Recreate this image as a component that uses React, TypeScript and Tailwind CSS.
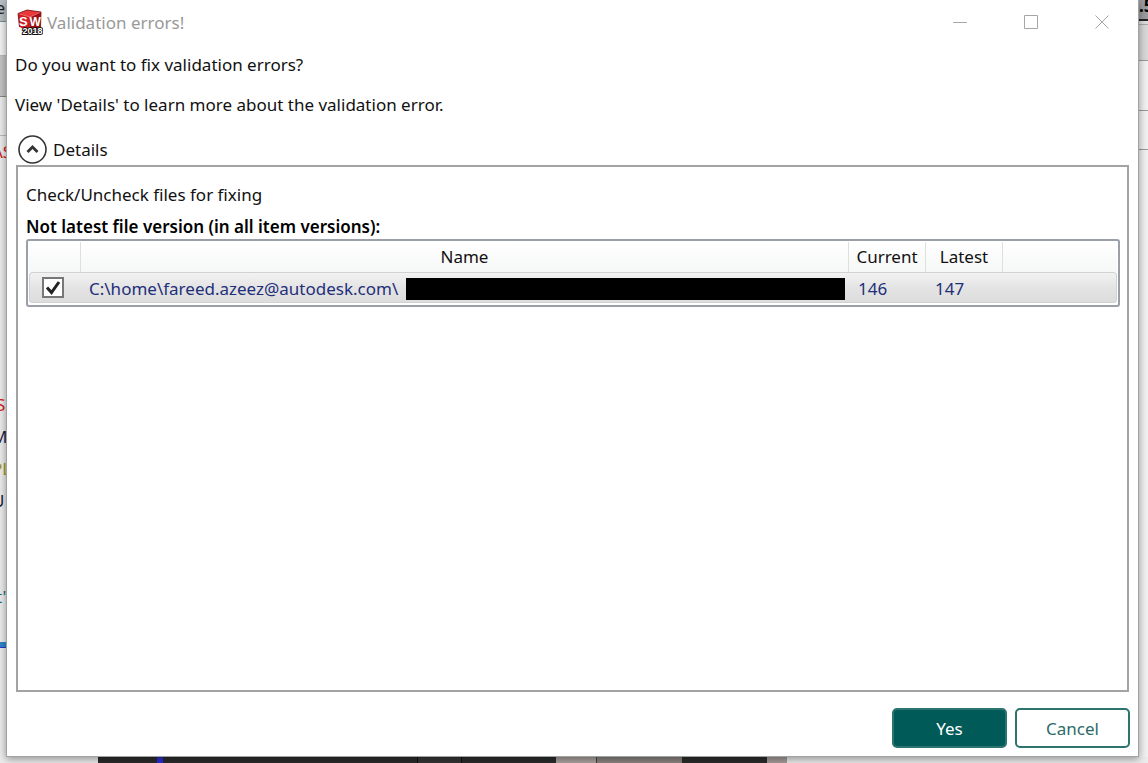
import { useState } from "react";

function AppIcon() {
  return (
    <svg viewBox="0 0 26 26" className="h-[26px] w-[26px] shrink-0" aria-hidden="true">
      <path d="M1 4.500 10 1l14 2-11 5z" fill="#e8383a" />
      <path d="M1 4.500l12 3.500v15L2.500 18z" fill="#cf1d22" />
      <path d="M13 8l11-5-.5 16L13 23z" fill="#a00f14" />
      <path d="M1 4.500l12 3.500 11-5" fill="none" stroke="#f0706c" strokeWidth="0.600" />
      <path d="M1 4.500 10 1l14 2-.5 16M1 4.500L2.500 18" fill="none" stroke="#6d0a0d" strokeWidth="0.800" />
      <g fontFamily="Liberation Sans Narrow, Liberation Sans, sans-serif" fontWeight="700" fill="#fff">
        <text x="2" y="17" fontSize="13">S</text>
        <text x="12.500" y="17" fontSize="12">W</text>
        <text x="5.500" y="25" fontSize="9" stroke="#111" strokeWidth="2" paintOrder="stroke">2018</text>
      </g>
    </svg>
  );
}

function TitleBar() {
  const control = "flex h-11 w-[71px] items-center justify-center text-[#a6a6a6]";
  return (
    <header className="flex h-11 items-center pr-[1px] pl-[10px]">
      <AppIcon />
      <h1 className="ml-1 flex-1 pt-[2px] text-[17px] text-[#999]">Validation errors!</h1>
      <button aria-label="Minimize" className={control}>
        <svg viewBox="0 0 14 14" className="h-[14px] w-[14px]" stroke="currentColor" fill="none"><path d="M0 7.500h14" /></svg>
      </button>
      <button aria-label="Maximize" className={control}>
        <svg viewBox="0 0 14 14" className="h-[14px] w-[14px]" stroke="currentColor" fill="none"><path d="M.5.5h13v13H.5z" /></svg>
      </button>
      <button aria-label="Close" className={control}>
        <svg viewBox="0 0 14 14" className="h-[14px] w-[14px]" stroke="currentColor" fill="none"><path d="M.5.5l13 13M13.500.5l-13 13" /></svg>
      </button>
    </header>
  );
}

function FilesTable() {
  const [checked, setChecked] = useState(true);
  const head = "border-r border-[#dedfe1] p-0 font-normal";
  const cell = "border-y border-[#d2d2d2] p-0";
  return (
    <div className="rounded-[3px] border-2 border-[#9ba0a8] px-[1px] pt-[1px] pb-[2px]">
      <table className="w-full table-fixed border-separate border-spacing-0 text-left">
        <colgroup>
          <col className="w-[52px]" />
          <col />
          <col className="w-[77px]" />
          <col className="w-[77px]" />
          <col className="w-[114px]" />
        </colgroup>
        <thead className="text-center">
          <tr className="h-[30px] bg-linear-to-b from-white to-[#f6f7f7]">
            <th className={head} aria-label="Selected" />
            <th className={head}>Name</th>
            <th className={head}>Current</th>
            <th className={head}>Latest</th>
            <td className="p-0" />
          </tr>
        </thead>
        <tbody className="text-[#1f2f7a]">
          <tr className="h-[31px] bg-linear-to-b from-[#f3f3f3] via-[#e4e4e4] to-[#dcdcdc]">
            <td className={`${cell} rounded-l-[4px] border-l pl-[12px]`}>
              <label className="relative block h-[21px] w-[22px]">
                <input
                  type="checkbox"
                  aria-label="Fix this file"
                  checked={checked}
                  onChange={(e) => setChecked(e.target.checked)}
                  className="block h-[21px] w-[22px] appearance-none border-2 border-[#777] bg-white"
                />
                {checked && (
                  <svg viewBox="0 0 22 21" className="pointer-events-none absolute inset-0 h-[21px] w-[22px]" fill="none" stroke="#222" strokeWidth="3">
                    <path d="M5 10.500l4.500 5L17 5" />
                  </svg>
                )}
              </label>
            </td>
            <td className={`${cell} pt-[2px] pr-1 pl-2`}>
              <div className="flex items-center gap-2">
                <span>C:\home\fareed.azeez@autodesk.com\</span>
                <span className="h-[22px] flex-1 bg-black" />
              </div>
            </td>
            <td className={`${cell} pt-[2px] pl-[9px]`}>146</td>
            <td className={`${cell} pt-[2px] pl-[9px]`}>147</td>
            <td className={`${cell} rounded-r-[4px] border-r`} />
          </tr>
        </tbody>
      </table>
    </div>
  );
}

function LeftBackdrop() {
  const line = "block h-8 leading-8";
  return (
    <div className="flex w-[6px] flex-col overflow-hidden bg-[#ececec] text-[17px] whitespace-nowrap" aria-hidden="true">
      <div className="h-[22px] border-b border-[#7e8a90] bg-[#b9c0c4] text-[16px] leading-4 text-[#222]"><span className="-ml-1">e</span></div>
      <div className="h-[34px] border-b border-[#bbb] bg-[#f4f4f4]" />
      <div className="h-[41px] border-b border-[#888] bg-[#c4c4c4]" />
      <div className="h-[39px] border-b border-[#bbb]" />
      <span className={`${line} -ml-2 text-[#d32020]`}>AS</span>
      <div className="h-[221px]" />
      <span className={`${line} -ml-1 text-[#d32020]`}>S</span>
      <span className={`${line} -ml-2 text-[#1c1c3a]`}>M</span>
      <span className={`${line} -ml-2 text-[#a59b16]`}>PL</span>
      <span className={`${line} -ml-2 text-[#1c1c3a]`}>U</span>
      <div className="h-[64px]" />
      <span className={`${line} -ml-1 text-[#176a86]`}>t'</span>
      <div className="h-[29px]" />
      <div className="h-[6px] border-b border-[#3434c8] bg-[#2f86c8]" />
    </div>
  );
}

function RightBackdrop() {
  return (
    <div className="flex w-[9px] flex-col overflow-hidden bg-[#f1f1f1]" aria-hidden="true">
      <div className="h-[21px] border-b-2 border-[#222] bg-[#9c9ca0] text-[17px] leading-3 font-bold whitespace-nowrap text-black">.5</div>
      <div className="h-[4px] border-b border-[#aaa] bg-[#ddd]" />
      <div className="h-[36px] border-b border-[#999] bg-[#d8d8d8]" />
      <div className="h-[50px] border-b border-[#999]" />
      <div className="h-[39px] border-b border-[#999]" />
    </div>
  );
}

function BottomBackdrop() {
  return (
    <div className="flex h-[6px] bg-[#ececec]" aria-hidden="true">
      <div className="w-[98px]" />
      <div className="w-[59px] bg-[#2b2b2b]" />
      <div className="w-[6px] bg-[#2b2bd6]" />
      <div className="w-[254px] bg-[#2b2b2b]" />
      <div className="w-[45px] border-x border-[#111] bg-[#353535]" />
      <div className="w-[94px] bg-[#2b2b2b]" />
      <div className="w-[40px] bg-[#aaa19d]" />
      <div className="w-[86px] border-l border-[#444] bg-[#8b8480]" />
      <div className="w-[85px] bg-[#2b2b2b]" />
      <div className="w-[20px] bg-[#a59c99]" />
    </div>
  );
}

export default function App() {
  const [open, setOpen] = useState(true);
  const action = "h-10 w-[115px] rounded-[5px] border-2 border-[#2c7470] pt-[2px]";
  return (
    <div className="flex min-h-screen flex-col font-['Noto_Sans',sans-serif] text-[17px] leading-6 text-[#111]">
      <div className="flex flex-1">
        <LeftBackdrop />
        <main className="relative flex min-w-0 flex-1 flex-col border-x border-b border-[#9fa3a1] bg-white shadow-[0_2px_8px_rgba(0,0,0,0.4)]">
          <TitleBar />
          <div className="flex flex-1 flex-col px-2 pt-[9px] pb-2">
            <p>Do you want to fix validation errors?</p>
            <p className="mt-4">View 'Details' to learn more about the validation error.</p>
            <button className="mt-[18px] ml-[3px] flex items-center gap-[6px] self-start" aria-expanded={open} onClick={() => setOpen(!open)}>
              <svg viewBox="0 0 29 29" className="h-[29px] w-[29px]" fill="none" stroke="#333">
                <circle cx="14.500" cy="14.500" r="13.500" strokeWidth="1.600" />
                <path d={open ? "M9.500 17l5-5 5 5" : "M9.500 12l5 5 5-5"} strokeWidth="2.800" />
              </svg>
              Details
            </button>
            <section className="mx-[1px] mt-[1px] flex-1 border-2 border-[#a3a3a3] pt-4 pr-[7px] pl-2">
              {open && (
                <>
                  <p>Check/Uncheck files for fixing</p>
                  <h2 className="mt-2 font-semibold text-black">Not latest file version (in all item versions):</h2>
                  <FilesTable />
                </>
              )}
            </section>
            <footer className="mt-4 flex justify-end gap-2">
              <button className={`${action} bg-[#005a58] text-white`}>Yes</button>
              <button className={`${action} bg-white text-[#2c6b69]`}>Cancel</button>
            </footer>
          </div>
        </main>
        <RightBackdrop />
      </div>
      <BottomBackdrop />
    </div>
  );
}
